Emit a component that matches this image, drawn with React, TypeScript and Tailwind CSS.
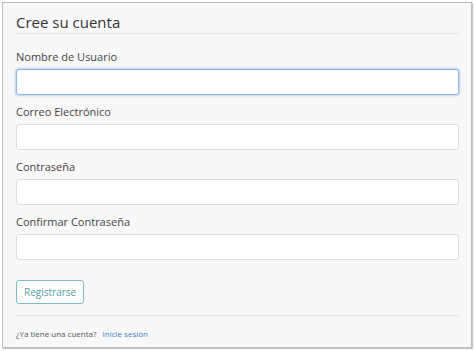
import React from 'react';

const fields = [
  { id: 'username', label: 'Nombre de Usuario', type: 'text', focused: true },
  { id: 'email', label: 'Correo Electrónico', type: 'email' },
  { id: 'password', label: 'Contraseña', type: 'password' },
  { id: 'confirm', label: 'Confirmar Contraseña', type: 'password' },
];

export default function App() {
  return (
    <div className="w-[474px] h-[351px] bg-white p-[2px] font-['Open_Sans',sans-serif]">
      <div className="h-[346px] w-[470px] border border-[#bdbdbd] bg-[#f8f8f8] shadow-[1px_1px_1px_#c8c8c8]">
        <div className="pl-[13px] pr-[12px] pt-[9px]">
          <h1 className="text-[15px] leading-[20px] text-[#333] pb-[1px] border-b border-[#e6e6e6]">
            Cree su cuenta
          </h1>

          <form className="mt-[14px]">
            {fields.map((f) => (
              <div key={f.id} className="mb-[8px]">
                <label htmlFor={f.id} className="block text-[11px] leading-[18px] text-[#444] mb-[3px]">
                  {f.label}
                </label>
                <input
                  id={f.id}
                  type={f.type}
                  className={
                    f.focused
                      ? 'block w-full h-[26px] rounded-[3px] bg-white border border-[#8fb8e6] shadow-[0_0_2px_1px_rgba(102,160,225,0.45)] outline-none'
                      : 'block w-full h-[26px] rounded-[3px] bg-white border border-[#dcdcdc] outline-none'
                  }
                />
              </div>
            ))}

            <button
              type="button"
              className="mt-[12px] h-[24px] px-[7px] rounded-[3px] border border-[#7cbfbf] bg-white text-[10px] text-[#5a9ea2]"
            >
              Registrarse
            </button>
          </form>

          <div className="mt-[11px] border-t border-[#e2e2e2] pt-[11px] text-[8px] leading-[14px]">
            <span className="text-[#555]">¿Ya tiene una cuenta?</span>
            <a href="#" className="ml-[6px] text-[#3a80c4]">Inicie sesión</a>
          </div>
        </div>
      </div>
    </div>
  );
}
